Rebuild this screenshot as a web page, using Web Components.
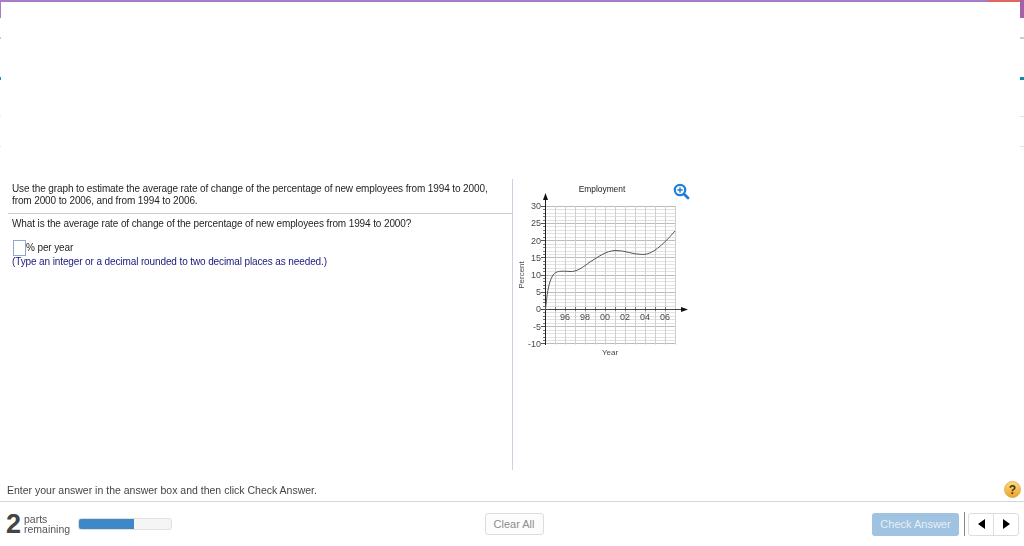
<!DOCTYPE html>
<html><head><meta charset="utf-8"><style>
html,body{margin:0;padding:0;background:#fff}
body{width:1024px;height:546px;overflow:hidden;font-family:"Liberation Sans",Arial,sans-serif;color:#333}
</style></head><body>
<app-page></app-page>
<script>
function def(name, html){
  customElements.define(name, class extends HTMLElement{
    constructor(){super();this.attachShadow({mode:'open'}).innerHTML=html;}
  });
}
def('top-strip',`<style>
:host{display:block;height:179px;box-sizing:border-box}
.bar{display:flex;height:2px}
.bar i{display:block;background:#a67cc9}
.bar i.a{flex:1}.bar i.b{width:32px;background:#e4645f}.bar i.c{width:4px;background:#a560a8}
.cols{display:flex;justify-content:space-between}
.col{display:flex;flex-direction:column}
.l{width:1px}.r{width:4px}
.col i{display:block}
</style>
<div class="bar"><i class="a"></i><i class="b"></i><i class="c"></i></div>
<div class="cols">
<div class="col l"><i style="height:16px;background:#a67cc9"></i><i style="height:19px;margin-top:0;background:transparent"></i><i style="height:2px;background:#ccc"></i><i style="height:38px"></i><i style="height:3px;background:#0d96c0"></i><i style="height:36px"></i><i style="height:1px;background:#e4e4e4"></i><i style="height:29px"></i><i style="height:1px;background:#e4e4e4"></i></div>
<div class="col r"><i style="height:16px;background:#a560a8"></i><i style="height:19px"></i><i style="height:2px;background:#ccc"></i><i style="height:38px"></i><i style="height:3px;background:#0d88a8"></i><i style="height:36px"></i><i style="height:1px;background:#e4e4e4"></i><i style="height:29px"></i><i style="height:1px;background:#e4e4e4"></i></div>
</div>`);

def('question-pane',`<style>
:host{display:block;width:513px;box-sizing:border-box;border-right:1px solid #ccd3e0;font-size:10px;letter-spacing:-.113px;line-height:12px;color:#1f1f1f;height:291px;filter:blur(.25px)}
.intro{padding:4px 0 0 4px;height:30px;box-sizing:content-box;border-bottom:1px solid #ccd0d6;margin-left:8px;width:500px}
.q{padding:4px 0 0 12px}
.ans{display:flex;align-items:center;margin:10px 0 0 13px;height:16px}
.box{width:11px;height:14px;border:1px solid #8fa8d2;background:#fff;display:block;box-sizing:content-box}
.hint{margin:0 0 0 12px;color:#18187e}
</style>
<div class="intro">Use the graph to estimate the average rate of change of the percentage of new employees from 1994 to 2000,<br>from 2000 to 2006, and from 1994 to 2006.</div>
<div class="q">What is the average rate of change of the percentage of new employees from 1994 to 2000?</div>
<div class="ans"><span class="box"></span><span>% per year</span></div>
<div class="hint">(Type an integer or a decimal rounded to two decimal places as needed.)</div>`);

function gridLines(){
  let s='';
  const Y=v=>Math.round(309-v*3.44)+.5;
  for(let v=-10;v<=30;v++){
    const major=v%5===0;
    s+=`<line x1="545" x2="675" y1="${Y(v)}" y2="${Y(v)}" stroke="${major?'#bcbcbc':'#e2e2e2'}"/>`;
  }
  for(let x=555;x<=675;x+=10){
    s+=`<line y1="206" y2="344.6" x1="${x+.5}" x2="${x+.5}" stroke="#cfcfcf"/>`;
  }
  for(let v=-10;v<=30;v++){
    const major=v%5===0,y=Y(v);
    s+=`<line x1="${major?541:543}" x2="545" y1="${y}" y2="${y}" stroke="${major?'#555':'#777'}"/>`;
  }
  for(let x=555;x<=665;x+=10){
    s+=`<line y1="307" y2="311" x1="${x+.5}" x2="${x+.5}" stroke="#777"/>`;
  }
  return s;
}
function labels(){
  let s='';
  [[30,206],[25,223],[20,240.5],[15,257.5],[10,275],[5,292],[0,309],[-5,326.5],[-10,344]].forEach(([v,y])=>{
    s+=`<text x="541" y="${y+3}" text-anchor="end">${v}</text>`;
  });
  [['96',565],['98',585],['00',605],['02',625],['04',645],['06',665]].forEach(([t,x])=>{
    s+=`<text x="${x}" y="320" text-anchor="middle">${t}</text>`;
  });
  return s;
}
def('employment-graph',`<style>
:host{display:block;flex:1;height:291px;filter:blur(.25px)}
svg{display:block}
text{font-family:"Liberation Sans",Arial,sans-serif;font-size:9px;fill:#4a4a4a}
</style>
<svg width="511" height="291" viewBox="513 179 511 291">
${gridLines()}
<line x1="545.5" x2="545.5" y1="198" y2="345" stroke="#222"/>
<line x1="541" x2="683" y1="309.5" y2="309.5" stroke="#444"/>
<path d="M545.5 193 l-2.5 7 h5z" fill="#111"/>
<path d="M688 309.5 l-7 -2.5 v5z" fill="#111"/>
<path d="M545.5 309 C547 296 548 283 553 275 C556 270.5 562 271 570 271.5 C577 272 583 267 590 262 C598 257 606 251 615 250.5 C624 250 632 254.5 643 254.5 C652 254.5 662 246 675 231" fill="none" stroke="#555" stroke-width="1"/>
${labels()}
<text x="602" y="192" style="font-size:8.4px;fill:#222" text-anchor="middle">Employment</text>
<text x="610" y="355" style="font-size:8px" text-anchor="middle">Year</text>
<text transform="translate(524 275) rotate(-90)" style="font-size:8px" text-anchor="middle">Percent</text>
<g fill="none" stroke="#1f7fd8">
<circle cx="680" cy="190" r="5.2" stroke-width="2.2"/>
<path d="M684 194 l4 4" stroke-width="2.8" stroke-linecap="round"/>
<path d="M677.3 190h5.4M680 187.3v5.4" stroke-width="1.4"/>
</g>
</svg>`);

def('status-row',`<style>
:host{display:flex;align-items:center;justify-content:space-between;height:32px;box-sizing:border-box;border-bottom:1px solid #d5d6da;padding:9px 3px 0 7px;font-size:10.5px;color:#444}
svg{display:block;margin-top:-1px}
text{font-family:"Liberation Sans",Arial,sans-serif;font-weight:700;font-size:12px;fill:#4a3410}
span{filter:blur(.2px)}
</style>
<span><slot></slot></span>
<svg width="17" height="17" viewBox="0 0 17 17"><defs><linearGradient id="g" x1="0" y1="0" x2="0" y2="1"><stop offset="0" stop-color="#fbdc7e"/><stop offset="1" stop-color="#eba22c"/></linearGradient></defs><circle cx="8.5" cy="8.5" r="8" fill="url(#g)" stroke="#d9a648" stroke-width=".8"/><text x="8.5" y="13" text-anchor="middle">?</text></svg>`);

def('footer-bar',`<style>
:host{display:grid;grid-template-columns:1fr auto 1fr;align-items:center;height:44px;padding:0 5px 0 6px;box-sizing:border-box;color:#555}
.left{display:flex;align-items:center}
.num{font-size:27px;font-weight:700;color:#444;line-height:26px;width:18px}
.parts{font-size:10.5px;line-height:10.5px;width:54px;color:#555;filter:blur(.2px)}
.prog{width:92px;height:10px;border:1px solid #e0e0e0;border-radius:3px;background:#f5f5f5;overflow:hidden;box-sizing:content-box}
.prog i{display:block;width:55px;height:100%;background:#3e87c8}
.clear{font:11px "Liberation Sans",Arial,sans-serif;color:#8d8d8d;background:#fcfcfc;border:1px solid #ddd;border-radius:3px;width:59px;height:22px;padding:0;margin-left:3px}
.right{display:flex;align-items:center;justify-content:flex-end}
.check{font:11px "Liberation Sans",Arial,sans-serif;color:#e6eff7;background:#9fc3e0;border:0;border-radius:3px;width:87px;height:23px;padding:0}
.sep{width:1px;height:24px;background:#888;margin:0 3px 0 5px}
.nav{display:flex;border:1px solid #ddd;border-radius:3px;height:21px;width:49px;background:#fff}
.nav span{flex:1;display:flex;align-items:center;justify-content:center}
.nav span+span{border-left:1px solid #ddd}
</style>
<div class="left"><span class="num">2</span><span class="parts">parts<br>remaining</span><div class="prog"><i></i></div></div>
<button class="clear">Clear All</button>
<div class="right"><button class="check">Check Answer</button><span class="sep"></span>
<div class="nav"><span><svg width="7" height="10"><path d="M7 0v10L0 5z" fill="#000"/></svg></span><span><svg width="7" height="10"><path d="M0 0v10l7-5z" fill="#000"/></svg></span></div></div>`);

def('app-page',`<style>
:host{display:flex;flex-direction:column;width:1024px;height:546px}
.main{display:flex}
</style>
<top-strip></top-strip>
<div class="main"><question-pane></question-pane><employment-graph></employment-graph></div>
<status-row>Enter your answer in the answer box and then click Check Answer.</status-row>
<footer-bar></footer-bar>`);
</script>
</body></html>
